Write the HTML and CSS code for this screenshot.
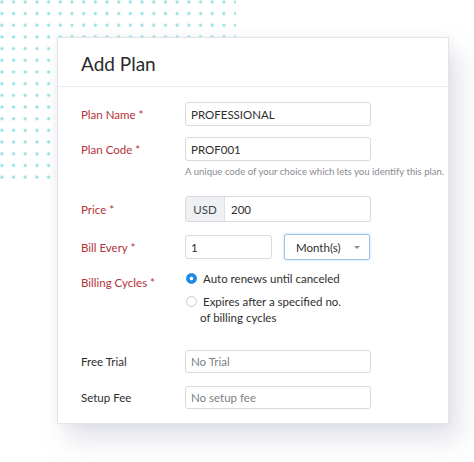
FILE: index.html
```html
<!DOCTYPE html>
<html>
<head>
<meta charset="utf-8">
<link rel="stylesheet" href="styles.css">
</head>
<body>
<div class="page">
  <div class="dots"></div>
  <div class="card">
    <div class="card-head">Add Plan</div>
    <div class="form">
      <div class="row r1">
        <div class="label req">Plan Name *</div>
        <div class="input">PROFESSIONAL</div>
      </div>
      <div class="row r2">
        <div class="label req">Plan Code *</div>
        <div class="input">PROF001</div>
      </div>
      <div class="hint">A unique code of your choice which lets you identify this plan.</div>
      <div class="row r3">
        <div class="label req">Price *</div>
        <div class="input group"><span class="addon">USD</span><span class="val">200</span></div>
      </div>
      <div class="row r4">
        <div class="label req">Bill Every *</div>
        <div class="pair">
          <div class="input small">1</div>
          <div class="select">Month(s)<span class="caret"></span></div>
        </div>
      </div>
      <div class="row r5 top">
        <div class="label req lab-cycles">Billing Cycles *</div>
        <div class="radios">
          <div class="radio on"><span class="dot"></span><span>Auto renews until canceled</span></div>
          <div class="radio"><span class="dot"></span><span>Expires after a specified no.<br><span class="wrap2">of billing cycles</span></span></div>
        </div>
      </div>
      <div class="row r6">
        <div class="label">Free Trial</div>
        <div class="input ph">No Trial</div>
      </div>
      <div class="row r7">
        <div class="label">Setup Fee</div>
        <div class="input ph">No setup fee</div>
      </div>
    </div>
  </div>
</div>
</body>
</html>
```
FILE: styles.css
```css
html, body {
  margin: 0;
  padding: 0;
  background: #ffffff;
}
body {
  font-family: Lato, "Open Sans", Arial, sans-serif;
  color: #333;
}
.page {
  position: relative;
  width: 474px;
  height: 462px;
  padding: 37px 0 0 57px;
  box-sizing: border-box;
}
.dots {
  position: absolute;
  left: -4px;
  top: -4px;
  width: 240px;
  height: 188px;
  background-image: radial-gradient(circle, #93e0e1 1.3px, transparent 1.8px);
  background-size: 11.7px 11.7px;
  background-position: 0 0;
}
.card {
  position: relative;
  width: 392px;
  height: 387px;
  box-sizing: border-box;
  background: #fff;
  border: 1px solid #e3e4e8;
  box-shadow: 10px 16px 24px rgba(150, 155, 178, 0.28), 0 0 8px rgba(170, 175, 190, 0.14);
}
.card-head {
  height: 49px;
  border-bottom: 1px solid #ececef;
  display: flex;
  align-items: center;
  padding-left: 23px;
  padding-top: 2px;
  box-sizing: border-box;
  font-size: 19px;
  color: #2b2b2b;
  letter-spacing: 0;
}
.form {
  padding-left: 23px;
}
.row {
  display: flex;
  align-items: center;
}
.row.top {
  align-items: flex-start;
}
.label {
  width: 104px;
  flex: none;
  font-size: 11.5px;
  color: #2d2d2d;
}
.label.req {
  color: #b4323a;
}
.input {
  width: 186px;
  height: 24px;
  box-sizing: border-box;
  border: 1px solid #d9dade;
  border-radius: 3px;
  padding-left: 5px;
  display: flex;
  align-items: center;
  font-size: 11.5px;
  color: #2e2e2e;
}
.input.ph {
  color: #7c7f86;
  height: 23px;
}
.input.group {
  padding-left: 0;
  height: 26px;
  overflow: hidden;
}
.addon {
  width: 38px;
  height: 100%;
  background: #eef0f4;
  border-right: 1px solid #e0e2e6;
  display: flex;
  align-items: center;
  justify-content: center;
  color: #444;
  flex: none;
}
.val {
  padding-left: 6px;
}
.pair {
  display: flex;
  align-items: center;
  gap: 12px;
}
.input.small {
  width: 87px;
}
.select {
  width: 86px;
  height: 26px;
  box-sizing: border-box;
  border: 1px solid #9fc3ea;
  border-radius: 2px;
  box-shadow: 0 0 3px rgba(110, 165, 230, 0.45);
  display: flex;
  align-items: center;
  padding-left: 11px;
  font-size: 11.5px;
  color: #2e2e2e;
  position: relative;
}
.caret {
  position: absolute;
  right: 9px;
  top: 11px;
  width: 0;
  height: 0;
  border-left: 3px solid transparent;
  border-right: 3px solid transparent;
  border-top: 3px solid #8a8d94;
}
.hint {
  margin-left: 104px;
  margin-top: 4px;
  font-size: 9.6px;
  color: #8a8c92;
  white-space: nowrap;
  line-height: 14px;
}
.r1 { margin-top: 15px; }
.r2 { margin-top: 11px; }
.r3 { margin-top: 17px; }
.r4 { margin-top: 12px; }
.r5 { margin-top: 11px; }
.r6 { margin-top: 24px; }
.r7 { margin-top: 13px; }
.lab-cycles {
  padding-top: 5px;
}
.radios {
  display: flex;
  flex-direction: column;
  gap: 7px;
  font-size: 11.5px;
  color: #2e2e2e;
}
.radio {
  display: flex;
  align-items: flex-start;
  line-height: 16px;
}
.radio .dot {
  width: 11px;
  height: 11px;
  box-sizing: border-box;
  border-radius: 50%;
  border: 1px solid #c9cbd0;
  margin: 2px 6px 0 1px;
  flex: none;
  background: #fff;
}
.radio.on .dot {
  border-color: #1e8ae6;
  background: radial-gradient(circle, #fff 1.6px, #1e8ae6 2.2px);
}
.radio .wrap2 {
  display: inline-block;
  margin-left: -3px;
  line-height: 15px;
}
```
